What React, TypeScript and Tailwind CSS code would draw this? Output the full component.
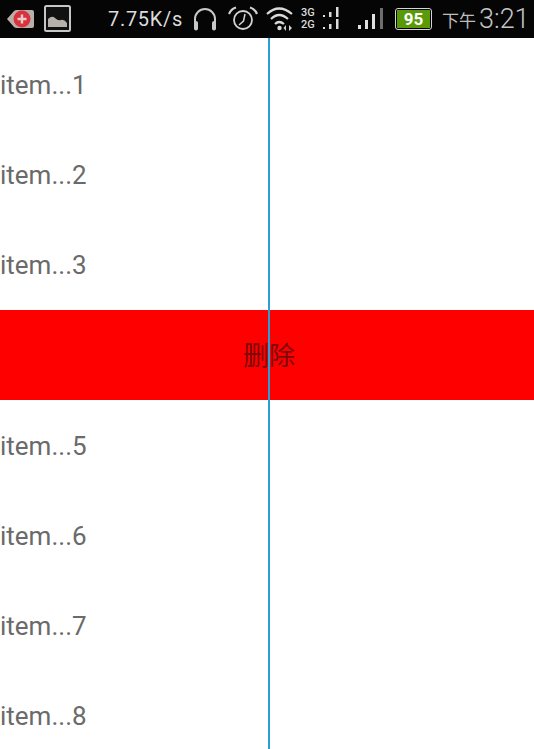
import React from 'react';

const font = { fontFamily: 'Roboto, "Noto Sans CJK SC", sans-serif' };

const NotifyIcon = () => (
  <svg width="28" height="22" viewBox="0 0 28 22" className="shrink-0">
    <path d="M0 11 L7 3 Q8 2 10 2 H25 Q27 2 27 4 V18 Q27 20 25 20 H10 Q8 20 7 19 Z" fill="#b9aeaa" />
    <circle cx="15" cy="11" r="8.5" fill="#d8323c" />
    <path d="M15 6.5 V15.5 M10.5 11 H19.5" stroke="#eec9c9" strokeWidth="2.4" />
  </svg>
);

const PictureIcon = () => (
  <svg width="28" height="28" viewBox="0 0 28 28" className="ml-[9px] shrink-0">
    <rect x="1" y="1" width="25" height="25" rx="1.5" fill="#111" stroke="#c6c6c6" strokeWidth="2" />
    <path d="M4 22 V14 Q8 10 11 13 T17 15 T23 18 V22 Z" fill="#b5b0ac" />
  </svg>
);

const Headphones = () => (
  <svg width="28" height="26" viewBox="0 0 28 26" className="ml-[8px] shrink-0">
    <path d="M4 19 V13 A10 10 0 0 1 24 13 V19" fill="none" stroke="#c8c8c8" strokeWidth="2" />
    <rect x="3" y="15" width="4" height="9.5" rx="2" fill="#c8c8c8" />
    <rect x="21" y="15" width="4" height="9.5" rx="2" fill="#c8c8c8" />
  </svg>
);

const Alarm = () => (
  <svg width="30" height="26" viewBox="0 0 30 26" className="ml-[9px] shrink-0">
    <circle cx="15" cy="14" r="9" fill="none" stroke="#d2d2d2" strokeWidth="1.8" />
    <path d="M17 8 L15.5 15 L11 19" fill="none" stroke="#d2d2d2" strokeWidth="1.5" />
    <path d="M1 8 Q3 3 8 1.5 M29 8 Q27 3 22 1.5" fill="none" stroke="#d2d2d2" strokeWidth="2.2" />
  </svg>
);

const Wifi = () => (
  <svg width="30" height="26" viewBox="0 0 30 26" className="ml-[8px] shrink-0">
    <path d="M1 8 Q13 -3 26 8 M5 13 Q13 5 22 13 M9 18 Q13 14 18 18" fill="none" stroke="#dadada" strokeWidth="2.2" />
    <circle cx="13.5" cy="22" r="2.2" fill="#dadada" />
    <path d="M20 19 V25 L17.5 22 Z M23 19 V25 L26 22 Z" fill="#cfcfcf" />
  </svg>
);

const SimBars = () => (
  <svg width="20" height="24" viewBox="0 0 20 24" className="ml-[5px] shrink-0">
    <rect x="1" y="8" width="2" height="2" fill="#dcdcdc" />
    <rect x="7" y="5" width="2.5" height="5" fill="#dcdcdc" />
    <rect x="14" y="0" width="2.5" height="10" fill="#dcdcdc" />
    <rect x="1" y="20" width="2" height="2" fill="#dcdcdc" />
    <rect x="7" y="17" width="2.5" height="5" fill="#dcdcdc" />
    <rect x="14" y="12" width="2.5" height="10" fill="#dcdcdc" />
  </svg>
);

const Signal = () => (
  <svg width="28" height="24" viewBox="0 0 28 24" className="ml-[15px] shrink-0">
    <rect x="1" y="18" width="3" height="4" fill="#e0e0e0" />
    <rect x="8" y="13" width="3" height="9" fill="#e0e0e0" />
    <rect x="15" y="7" width="3" height="15" fill="#e0e0e0" />
    <rect x="23" y="1" width="3" height="21" fill="#6e6e6e" />
  </svg>
);

const StatusBar = () => (
  <div className="flex h-[38px] shrink-0 items-center bg-[#050505] pl-[7px] text-[#dcdcdc]" style={font}>
    <NotifyIcon />
    <PictureIcon />
    <span className="ml-[36px] w-[75px] shrink-0 text-[20px] leading-[28px] tracking-[0.7px]">7.75K/s</span>
    <Headphones />
    <Alarm />
    <Wifi />
    <div className="ml-[5px] flex w-[16px] shrink-0 flex-col text-[11px] font-medium leading-[12px]">
      <span>3G</span>
      <span>2G</span>
    </div>
    <SimBars />
    <Signal />
    <div className="ml-[10px] flex h-[22px] w-[37px] shrink-0 items-center justify-center rounded-[3px] border border-[#d5d5d5] bg-black">
      <span className="flex h-[18px] w-[33px] items-center justify-center bg-[#5a9a08] text-[17px] font-bold leading-none text-white">95</span>
    </div>
    <span className="ml-[10px] mt-[3px] w-[37px] shrink-0 text-[17px] leading-[24px] text-[#bdbdbd]">下午</span>
    <span className="shrink-0 text-[27px] font-light leading-[34px] text-[#c4c4c4]">3:21</span>
  </div>
);

const Row = ({ label }: { label: string }) => (
  <div className="flex h-[90.2px] items-center pt-[2px] text-[26px] text-[#6a6a6a]">{label}</div>
);

const App: React.FC = () => {
  return (
    <div className="relative flex h-[749px] w-[534px] flex-col overflow-hidden bg-white" style={font}>
      <StatusBar />
      <div className="flex flex-col pt-[1.5px]">
        <Row label="item...1" />
        <Row label="item...2" />
        <Row label="item...3" />
        <div className="flex h-[90.2px] items-center justify-center bg-[#ff0000] pl-[4px] pt-[3px] text-[26px] text-[#7a0a0a]">删除</div>
        <Row label="item...5" />
        <Row label="item...6" />
        <Row label="item...7" />
        <Row label="item...8" />
      </div>
      {/* divider drawn over the list */}
      <div className="absolute bottom-0 left-[268px] top-[38px] w-[2px] bg-[#2a9fd6]" />
    </div>
  );
};

export default App;
